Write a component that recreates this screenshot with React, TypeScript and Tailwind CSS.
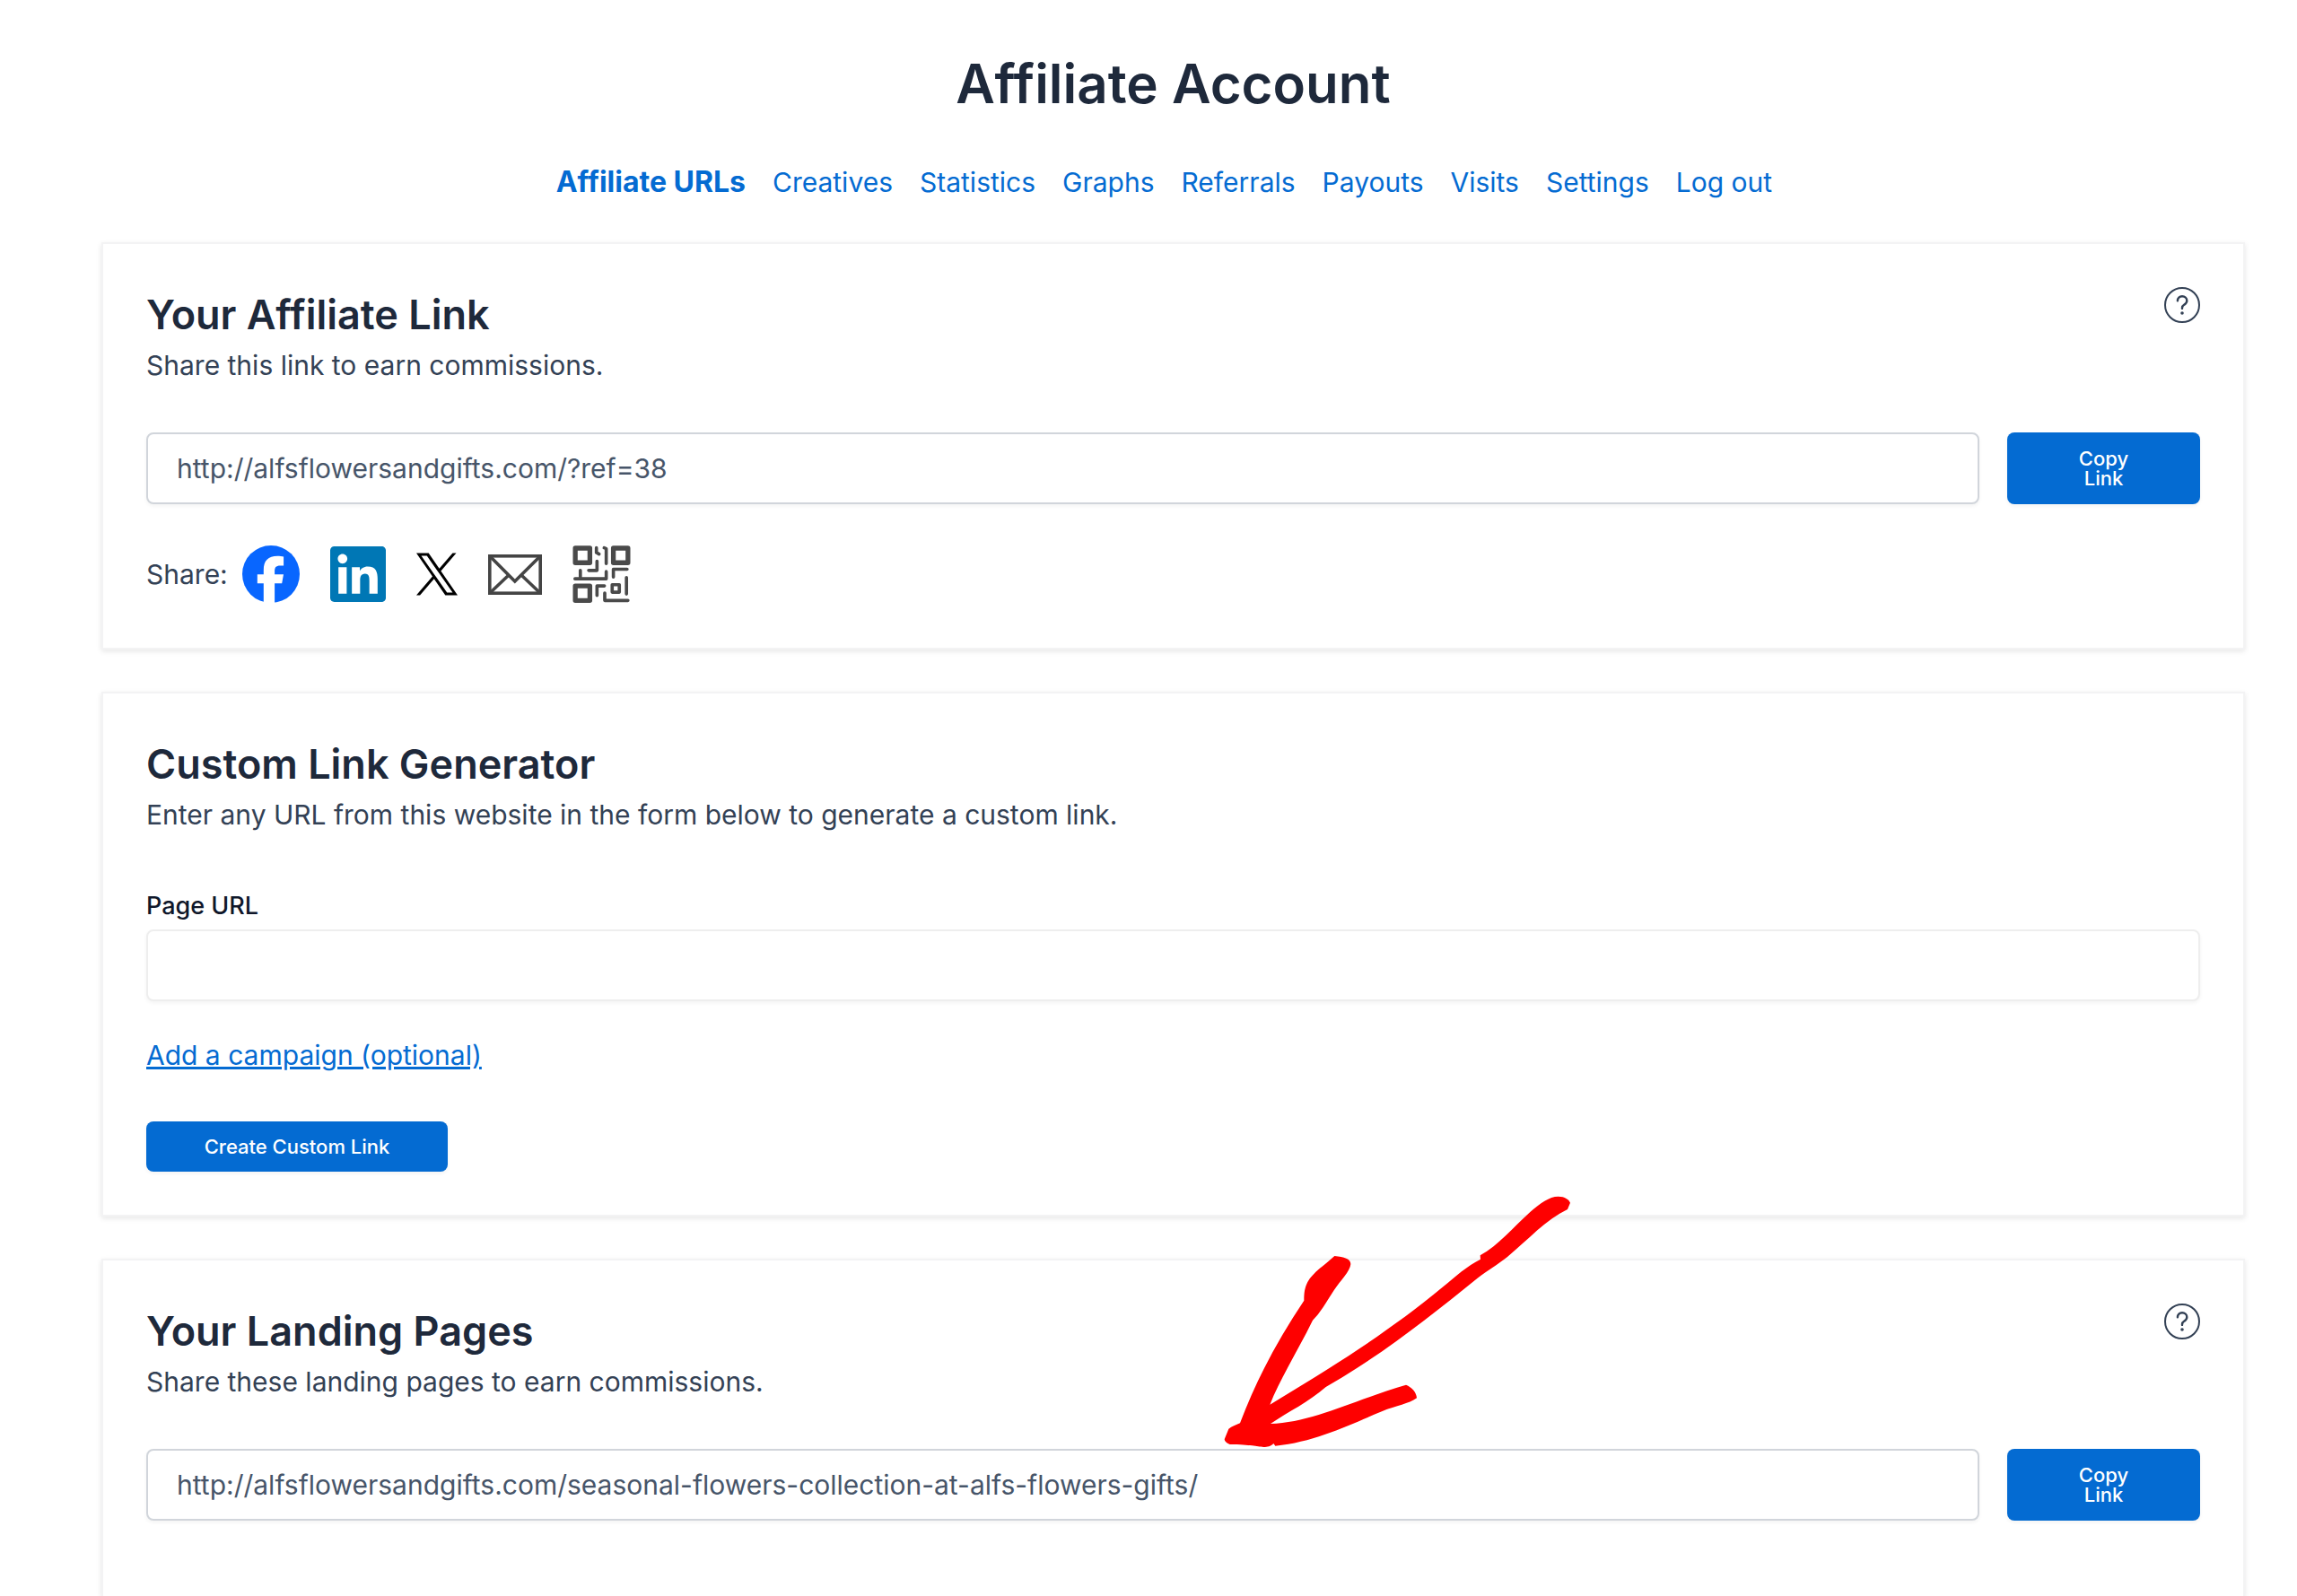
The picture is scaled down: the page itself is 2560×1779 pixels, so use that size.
import type { ReactNode } from "react";

const tabs = [
  "Affiliate URLs",
  "Creatives",
  "Statistics",
  "Graphs",
  "Referrals",
  "Payouts",
  "Visits",
  "Settings",
  "Log out",
];

function FacebookIcon() {
  return (
    <svg viewBox="0 0 64 64" className="size-16">
      <circle cx="32" cy="32" r="32" fill="#0866ff" />
      <path
        fill="#fff"
        d="M23.8 64V42.3h-7v-10h7v-4.6c0-10.8 5-15.9 15.5-15.9 2 0 5.400.4 6.800.8v9.900c-.8-.1-2.100-.1-3.700-.1-5.200 0-6.300 2-6.300 6.600v3.300h9.900l-1.800 10h-8.100V64z"
      />
    </svg>
  );
}

function LinkedInIcon() {
  return (
    <svg viewBox="0 0 24 24" className="size-[62px]">
      <path
        fill="#0077b5"
        d="M20.447 20.452h-3.554v-5.569c0-1.328-.027-3.037-1.852-3.037-1.853 0-2.136 1.445-2.136 2.939v5.667H9.351V9h3.414v1.561h.046c.477-.9 1.637-1.850 3.370-1.850 3.601 0 4.267 2.370 4.267 5.455v6.286zM5.337 7.433c-1.144 0-2.063-.926-2.063-2.065 0-1.138.920-2.063 2.063-2.063 1.140 0 2.064.925 2.064 2.063 0 1.139-.925 2.065-2.064 2.065zm1.782 13.019H3.555V9h3.564v11.452zM22.225 0H1.771C.792 0 0 .774 0 1.729v20.542C0 23.227.792 24 1.771 24h20.451C23.200 24 24 23.227 24 22.271V1.729C24 .774 23.200 0 22.222 0h.003z"
      />
    </svg>
  );
}

function XIcon() {
  return (
    <svg viewBox="0 0 1200 1227" className="h-12 w-[46px]">
      <path
        fill="#000"
        d="M714.163 519.284L1160.890 0H1055.030L667.137 450.887L357.328 0H0L468.492 681.821L0 1226.370H105.866L515.491 750.218L842.672 1226.370H1200L714.137 519.284H714.163ZM569.165 687.828L521.697 619.934L144.011 79.694H306.615L611.412 515.685L658.880 583.579L1055.080 1150.300H892.476L569.165 687.854V687.828Z"
      />
    </svg>
  );
}

function MailIcon() {
  return (
    <svg viewBox="0 0 60 45" className="h-[45px] w-[60px]" fill="none" stroke="#444" strokeWidth="3.600">
      <rect x="1.800" y="1.800" width="56.400" height="41.400" />
      <path d="M2 2l27.800 28L58 2M2 43l21.500-20.500M58 43L36.500 22.500" />
    </svg>
  );
}

function QrIcon() {
  return (
    <svg
      viewBox="50 24 195 193"
      className="h-16 w-[65px]"
      fill="none"
      stroke="#4a4a4a"
      strokeWidth="11"
      strokeLinecap="round"
      strokeLinejoin="round"
    >
      <g strokeWidth="16">
        <rect x="59" y="33" width="49" height="49" />
        <rect x="187" y="33" width="49" height="49" />
        <rect x="59" y="160" width="49" height="49" />
      </g>
      <rect x="183" y="156" width="24" height="25" />
      <path d="M130 32v16l9 5M156 32l7 3v50M132 77v31h-28M76 108v27M58 136h105v-24M187 130v-26h46M231 132v55M132 192v-32h25M158 184v25h78" />
    </svg>
  );
}

function HelpIcon() {
  return (
    <svg viewBox="0 0 40 40" className="size-10" fill="none" stroke="#334155" strokeWidth="2" strokeLinecap="round">
      <circle cx="20" cy="20" r="19" />
      <path strokeWidth="2.400" d="M14.900 15.200c0-3 2.200-5 5.100-5s5.300 2 5.300 4.900c0 2.200-1.200 3.500-2.900 4.500-1.600 1-2.400 1.900-2.400 3.700v.6" />
      <circle cx="20" cy="29" r="1.800" fill="#334155" stroke="none" />
    </svg>
  );
}

function Arrow() {
  return (
    <svg
      viewBox="0 0 1320 960"
      className="pointer-events-none absolute -top-24 left-[1225px] h-[320px] w-[440px]"
      fill="#fe0000"
      aria-hidden="true"
    >
      <path d="M442 273C474 276 496 282 496 300C494 324 464 352 440 388C414 428 393 466 369 488C320 588 260 684 226 770C400 664 600 546 805 376C845 342 886 306 930 284L929 271C990 238 1040 176 1096 126C1130 97 1160 74 1190 74C1212 74 1226 84 1230 95L1221 117C1150 150 1090 218 1020 276C985 304 955 320 920 347C760 476 600 604 413 711C355 762 290 792 228 834C370 830 520 750 681 704C700 712 716 728 717 748C690 768 650 772 600 793C490 838 380 894 244 908L238 900C228 910 218 912 205 912C180 910 165 904 92 903C80 899 74 892 74 886L88 851C98 843 112 838 126 832C180 690 250 555 340 422C340 396 342 380 352 360C370 328 408 304 442 273Z" />
    </svg>
  );
}

function Card({
  title,
  text,
  help,
  className,
  children,
}: {
  title: string;
  text: string;
  help?: boolean;
  className?: string;
  children: ReactNode;
}) {
  return (
    <section
      className={`relative border-2 border-[#f3f3f4] bg-white p-12 shadow-[0_2px_6px_rgba(0,0,0,0.1)] ${className ?? ""}`}
    >
      <header className="flex items-start justify-between">
        <div>
          <h2 className="text-[45px] leading-[62px] font-semibold text-[#1e293b]">{title}</h2>
          <p className="text-[30px] leading-[50px] text-[#334155]">{text}</p>
        </div>
        {help && (
          <button type="button" aria-label={`Help: ${title}`}>
            <HelpIcon />
          </button>
        )}
      </header>
      {children}
    </section>
  );
}

function CopyRow({ label, url }: { label: string; url: string }) {
  return (
    <div className="mt-[50px] flex gap-[31px]">
      <input
        type="text"
        readOnly
        aria-label={label}
        value={url}
        className="h-20 min-w-0 grow rounded-lg border-2 border-[#d1d5db] bg-white px-8 text-[30px] text-[#475569] shadow-[0_2px_4px_rgba(0,0,0,0.05)]"
      />
      <button
        type="button"
        className="flex h-20 w-[215px] shrink-0 items-center justify-center rounded-lg bg-[#046bd2] text-[22px] leading-[22px] font-medium text-white shadow-[0_2px_4px_rgba(0,0,0,0.05)]"
      >
        <span className="w-16">Copy Link</span>
      </button>
    </div>
  );
}

export default function App() {
  return (
    <main className="flex min-h-screen flex-col bg-white pt-[55px] pr-[58px] pl-[113px] font-['Inter',sans-serif]">
      <h1 className="text-center text-[60px] leading-[76px] font-semibold text-[#1e293b]">Affiliate Account</h1>
      <nav className="mt-12 flex items-baseline justify-center gap-[30px] pr-5 text-[30px] leading-[48px] text-[#046bd2]">
        {tabs.map((tab, i) => (
          <a
            key={tab}
            href="#"
            className={i === 0 ? "text-[32px] font-bold" : ""}
            aria-current={i === 0 ? "page" : undefined}
          >
            {tab}
          </a>
        ))}
      </nav>

      <div className="mt-[43px] flex grow flex-col gap-[47px]">
        <Card title="Your Affiliate Link" text="Share this link to earn commissions." help>
          <CopyRow label="Your affiliate link" url="http://alfsflowersandgifts.com/?ref=38" />
          <div className="mt-11 flex h-[68px] items-center gap-4">
            <span className="text-[30px] leading-[48px] text-[#334155]">Share:</span>
            <div className="flex items-center gap-[34px]">
              <a href="#" aria-label="Share on Facebook">
                <FacebookIcon />
              </a>
              <a href="#" aria-label="Share on LinkedIn">
                <LinkedInIcon />
              </a>
              <a href="#" aria-label="Share on X">
                <XIcon />
              </a>
              <a href="#" aria-label="Share by email">
                <MailIcon />
              </a>
              <a href="#" aria-label="Show QR code">
                <QrIcon />
              </a>
            </div>
          </div>
        </Card>

        <Card
          title="Custom Link Generator"
          text="Enter any URL from this website in the form below to generate a custom link."
        >
          <form className="mt-[59px] flex flex-col items-start">
            <label htmlFor="page-url" className="text-[27px] leading-9 font-medium text-[#0f172a]">
              Page URL
            </label>
            <input
              id="page-url"
              type="text"
              className="mt-2 h-20 w-full rounded-lg border-2 border-[#eeeeee] bg-white px-8 text-[30px] text-[#475569] shadow-[0_2px_4px_rgba(0,0,0,0.05)]"
            />
            <a href="#" className="mt-9 text-[30px] leading-[48px] text-[#046bd2] underline">
              Add a campaign (optional)
            </a>
            <button
              type="button"
              className="mt-[50px] h-14 w-[336px] rounded-lg bg-[#046bd2] text-[22px] leading-[22px] font-medium text-white shadow-[0_2px_4px_rgba(0,0,0,0.05)]"
            >
              Create Custom Link
            </button>
          </form>
        </Card>

        <Card
          title="Your Landing Pages"
          text="Share these landing pages to earn commissions."
          help
          className="grow border-b-0"
        >
          <CopyRow
            label="Landing page link"
            url="http://alfsflowersandgifts.com/seasonal-flowers-collection-at-alfs-flowers-gifts/"
          />
          <Arrow />
        </Card>
      </div>
    </main>
  );
}
